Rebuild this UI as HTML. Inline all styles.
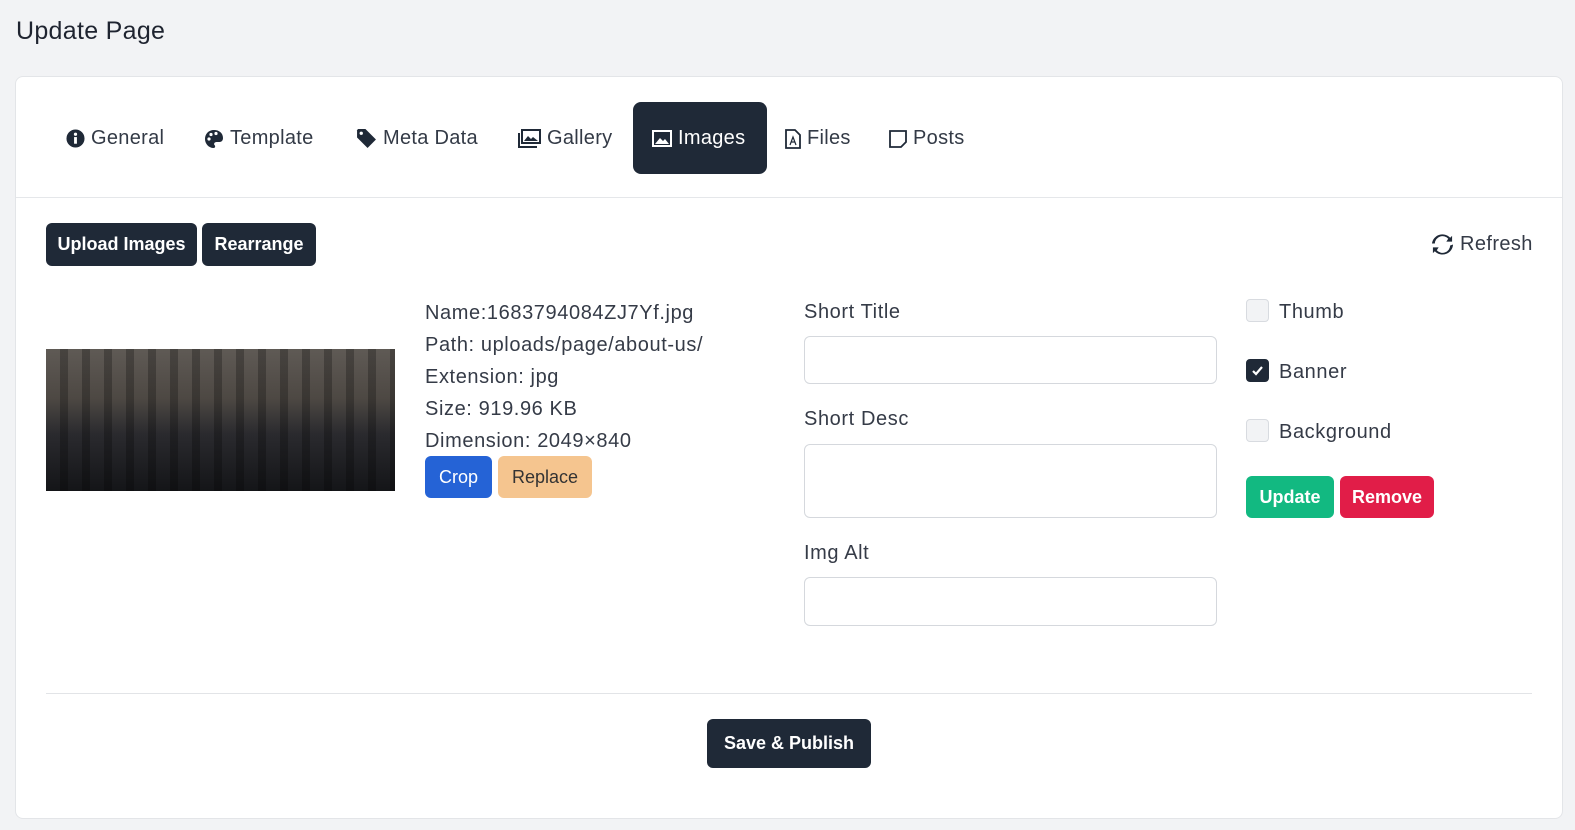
<!DOCTYPE html>
<html><head><meta charset="utf-8"><style>
*{box-sizing:border-box;margin:0;padding:0}
html,body{width:1575px;height:830px}
body{background:#f2f3f5;font-family:"Liberation Sans",sans-serif;color:#2a2f3a;position:relative;overflow:hidden}
.a{position:absolute}
h1{position:absolute;left:16px;top:17px;font-size:25px;font-weight:normal;color:#1f2430;letter-spacing:.3px}
.card{position:absolute;left:15px;top:76px;width:1548px;height:743px;background:#fff;border:1px solid #e3e5e8;border-radius:8px}
.tab{position:absolute;top:127px;font-size:20px;color:#333a46;display:flex;align-items:center;gap:6px;letter-spacing:.3px}
.btn{position:absolute;border-radius:6px;color:#fff;font-weight:bold;font-size:18px;display:flex;align-items:center;justify-content:center}
.dark{background:#1f2937}
.lbl{position:absolute;font-size:20px;color:#353b47;letter-spacing:.6px}
.inp{position:absolute;left:804px;width:413px;border:1px solid #d5d8dd;border-radius:6px;background:#fff}
.cb{position:absolute;left:1246px;width:23px;height:23px;border:1px solid #d8dbe0;border-radius:4px;background:#f2f3f5}
</style></head><body>
<h1>Update Page</h1>
<div class="card"></div>
<div class="a" style="left:16px;top:197px;width:1546px;height:1px;background:#e5e7ea"></div>
<div class="a" style="left:633px;top:102px;width:134px;height:72px;background:#1f2937;border-radius:8px"></div>
<div class="tab" style="left:66px"><svg width="19" height="19" viewBox="0 0 20 20"><circle cx="10" cy="10" r="9.5" fill="#1f2937"/><rect x="8.5" y="8.5" width="3" height="7" fill="#fff"/><circle cx="10" cy="5.5" r="1.7" fill="#fff"/></svg>General</div>
<div class="tab" style="left:204px"><svg width="20" height="20" viewBox="0 0 20 20"><path d="M10 1C4.5 1 1 5 1 10s4 9 8.5 9c2 0 2-2 1-3s0-3 2-3h3c2.5 0 3.5-2 3.5-4C19 4 15 1 10 1z" fill="#1f2937"/><circle cx="5" cy="10" r="1.6" fill="#fff"/><circle cx="7" cy="5.5" r="1.6" fill="#fff"/><circle cx="12" cy="4.5" r="1.6" fill="#fff"/></svg>Template</div>
<div class="tab" style="left:356px"><svg width="21" height="21" viewBox="0 0 20 20"><path d="M1 2v7l10 10 8-8L9 1H2z" fill="#1f2937"/><circle cx="5" cy="5" r="1.6" fill="#fff"/></svg>Meta Data</div>
<div class="tab" style="left:518px"><svg width="23" height="19" viewBox="0 0 23 19"><rect x="4" y="1" width="18" height="13" fill="none" stroke="#1f2937" stroke-width="2"/><path d="M1 4v14h18" fill="none" stroke="#1f2937" stroke-width="2"/><path d="M6 12l4-5 3 3 2-2 5 4z" fill="#1f2937"/></svg>Gallery</div>
<div class="tab" style="left:652px;color:#fff"><svg width="20" height="17" viewBox="0 0 20 17"><rect x="1" y="1" width="18" height="15" fill="none" stroke="#fff" stroke-width="2"/><path d="M3 14l5-6 3 3 2-2 4 5z" fill="#fff"/></svg>Images</div>
<div class="tab" style="left:785px"><svg width="16" height="20" viewBox="0 0 16 20"><path d="M1 1h9l5 5v13H1z" fill="none" stroke="#1f2937" stroke-width="1.8"/><path d="M5 16l3-8 3 8M6 13h4" fill="none" stroke="#1f2937" stroke-width="1.2"/></svg>Files</div>
<div class="tab" style="left:889px"><svg width="18" height="18" viewBox="0 0 18 18"><path d="M1 1h16v11l-5 5H1z" fill="none" stroke="#1f2937" stroke-width="1.8"/></svg>Posts</div>
<div class="btn dark" style="left:46px;top:223px;width:151px;height:43px">Upload Images</div>
<div class="btn dark" style="left:202px;top:223px;width:114px;height:43px">Rearrange</div>
<div class="a" style="left:1431px;top:233px;font-size:20px;color:#353b47;display:flex;align-items:center;gap:6px;letter-spacing:.4px"><svg width="23" height="23" viewBox="0 0 24 24"><path d="M4 11a8 8 0 0 1 14-5l-2 3h6V3l-2 2A11 11 0 0 0 1 11zM20 13a8 8 0 0 1-14 5l2-3H2v6l2-2a11 11 0 0 0 19-7z" fill="#1f2937"/></svg>Refresh</div>
<div class="a" style="left:46px;top:349px;width:349px;height:142px;background:linear-gradient(180deg,#5f5a55 0%,#4d4843 35%,#2a2a2e 60%,#141518 100%)"></div>
<div class="a" style="left:46px;top:349px;width:349px;height:142px;background:repeating-linear-gradient(90deg,rgba(0,0,0,0) 0 14px,rgba(0,0,0,.25) 14px 22px)"></div>
<div class="lbl" style="left:425px;top:297px;line-height:32px">Name:1683794084ZJ7Yf.jpg<br>Path: uploads/page/about-us/<br>Extension: jpg<br>Size: 919.96 KB<br>Dimension: 2049×840</div>
<div class="btn" style="left:425px;top:456px;width:67px;height:42px;background:#2563d6;font-weight:normal">Crop</div>
<div class="btn" style="left:498px;top:456px;width:94px;height:42px;background:#f5c58f;color:#333;font-weight:normal">Replace</div>
<div class="lbl" style="left:804px;top:301px">Short Title</div>
<div class="inp" style="top:336px;height:48px"></div>
<div class="lbl" style="left:804px;top:408px">Short Desc</div>
<div class="inp" style="top:444px;height:74px"></div>
<div class="lbl" style="left:804px;top:542px">Img Alt</div>
<div class="inp" style="top:577px;height:49px"></div>
<div class="cb" style="top:299px"></div>
<div class="lbl" style="left:1279px;top:301px">Thumb</div>
<div class="cb" style="top:359px;background:#1f2937;border-color:#1f2937"><svg width="21" height="21" viewBox="0 0 21 21"><path d="M6 11l3 3 6-7" fill="none" stroke="#fff" stroke-width="2.2"/></svg></div>
<div class="lbl" style="left:1279px;top:361px">Banner</div>
<div class="cb" style="top:419px"></div>
<div class="lbl" style="left:1279px;top:421px">Background</div>
<div class="btn" style="left:1246px;top:476px;width:88px;height:42px;background:#12b981">Update</div>
<div class="btn" style="left:1340px;top:476px;width:94px;height:42px;background:#e11d48">Remove</div>
<div class="a" style="left:46px;top:693px;width:1486px;height:1px;background:#e2e4e7"></div>
<div class="btn dark" style="left:707px;top:719px;width:164px;height:49px">Save &amp; Publish</div>
</body></html>
